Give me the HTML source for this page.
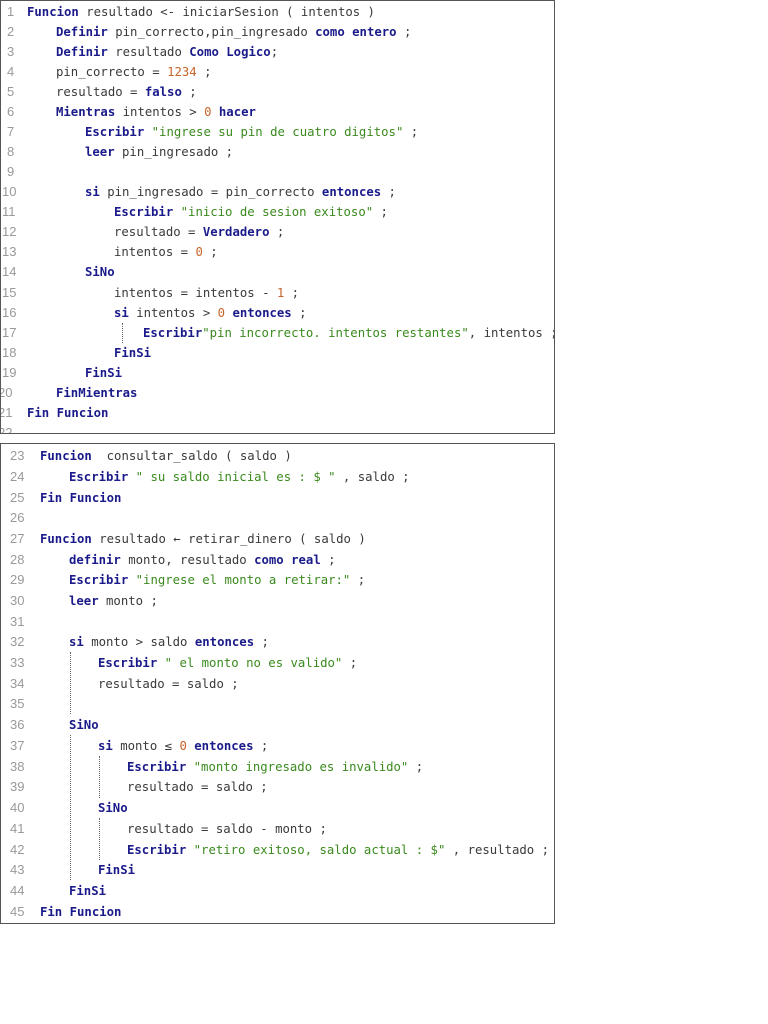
<!DOCTYPE html>
<html><head><meta charset="utf-8">
<style>
html,body{margin:0;padding:0;background:#fff;width:768px;height:1024px;overflow:hidden}
.p{position:absolute;left:0;width:553px;border:1px solid #555;background:#fff;overflow:hidden}
.l{position:absolute;left:0;white-space:pre;font-family:"DejaVu Sans Mono","Liberation Mono",monospace;font-size:12.3px;color:#3a3a3a;line-height:16px}
.n{position:absolute;white-space:pre;font-family:"Liberation Sans",sans-serif;font-size:13px;color:#999;line-height:16px}
.k{color:#1a1a8a;font-weight:bold}
.s{color:#3a8a1e}
.d{color:#c8642a}
.g{position:absolute;border-left:1px dotted #666;width:0}
</style></head><body>
<div class="p" style="top:0;height:432px">
<div class="n" style="left:6px;top:3px">1</div><div class="l" style="left:26px;top:3px"><span class="k">Funcion</span> resultado &lt;- iniciarSesion ( intentos )</div>
<div class="n" style="left:6px;top:23px">2</div><div class="l" style="left:55px;top:23px"><span class="k">Definir</span> pin_correcto,pin_ingresado <span class="k">como entero</span> ;</div>
<div class="n" style="left:6px;top:43px">3</div><div class="l" style="left:55px;top:43px"><span class="k">Definir</span> resultado <span class="k">Como Logico</span>;</div>
<div class="n" style="left:6px;top:63px">4</div><div class="l" style="left:55px;top:63px">pin_correcto = <span class="d">1234</span> ;</div>
<div class="n" style="left:6px;top:83px">5</div><div class="l" style="left:55px;top:83px">resultado = <span class="k">falso</span> ;</div>
<div class="n" style="left:6px;top:103px">6</div><div class="l" style="left:55px;top:103px"><span class="k">Mientras</span> intentos &gt; <span class="d">0</span> <span class="k">hacer</span></div>
<div class="n" style="left:6px;top:123px">7</div><div class="l" style="left:84px;top:123px"><span class="k">Escribir</span> <span class="s">"ingrese su pin de cuatro digitos"</span> ;</div>
<div class="n" style="left:6px;top:143px">8</div><div class="l" style="left:84px;top:143px"><span class="k">leer</span> pin_ingresado ;</div>
<div class="n" style="left:6px;top:163px">9</div>
<div class="n" style="left:1px;top:183px">10</div><div class="l" style="left:84px;top:183px"><span class="k">si</span> pin_ingresado = pin_correcto <span class="k">entonces</span> ;</div>
<div class="n" style="left:1px;top:203px">11</div><div class="l" style="left:113px;top:203px"><span class="k">Escribir</span> <span class="s">"inicio de sesion exitoso"</span> ;</div>
<div class="n" style="left:1px;top:223px">12</div><div class="l" style="left:113px;top:223px">resultado = <span class="k">Verdadero</span> ;</div>
<div class="n" style="left:1px;top:243px">13</div><div class="l" style="left:113px;top:243px">intentos = <span class="d">0</span> ;</div>
<div class="n" style="left:1px;top:263px">14</div><div class="l" style="left:84px;top:263px"><span class="k">SiNo</span></div>
<div class="n" style="left:1px;top:284px">15</div><div class="l" style="left:113px;top:284px">intentos = intentos - <span class="d">1</span> ;</div>
<div class="n" style="left:1px;top:304px">16</div><div class="l" style="left:113px;top:304px"><span class="k">si</span> intentos &gt; <span class="d">0</span> <span class="k">entonces</span> ;</div>
<div class="n" style="left:1px;top:324px">17</div><div class="l" style="left:142px;top:324px"><span class="k">Escribir</span><span class="s">"pin incorrecto. intentos restantes"</span>, intentos ;</div>
<div class="g" style="left:121px;top:322px;height:20px"></div>
<div class="n" style="left:1px;top:344px">18</div><div class="l" style="left:113px;top:344px"><span class="k">FinSi</span></div>
<div class="n" style="left:1px;top:364px">19</div><div class="l" style="left:84px;top:364px"><span class="k">FinSi</span></div>
<div class="n" style="left:-3px;top:384px">20</div><div class="l" style="left:55px;top:384px"><span class="k">FinMientras</span></div>
<div class="n" style="left:-3px;top:404px">21</div><div class="l" style="left:26px;top:404px"><span class="k">Fin Funcion</span></div>
<div class="n" style="left:-3px;top:424px">22</div>
</div>
<div class="p" style="top:443px;height:479px">
<div class="n" style="left:9px;top:4px">23</div><div class="l" style="left:39px;top:4px"><span class="k">Funcion</span>  consultar_saldo ( saldo )</div>
<div class="n" style="left:9px;top:25px">24</div><div class="l" style="left:68px;top:25px"><span class="k">Escribir</span> <span class="s">" su saldo inicial es : $ "</span> , saldo ;</div>
<div class="n" style="left:9px;top:46px">25</div><div class="l" style="left:39px;top:46px"><span class="k">Fin Funcion</span></div>
<div class="n" style="left:9px;top:66px">26</div>
<div class="n" style="left:9px;top:87px">27</div><div class="l" style="left:39px;top:87px"><span class="k">Funcion</span> resultado ← retirar_dinero ( saldo )</div>
<div class="n" style="left:9px;top:108px">28</div><div class="l" style="left:68px;top:108px"><span class="k">definir</span> monto, resultado <span class="k">como real</span> ;</div>
<div class="n" style="left:9px;top:128px">29</div><div class="l" style="left:68px;top:128px"><span class="k">Escribir</span> <span class="s">"ingrese el monto a retirar:"</span> ;</div>
<div class="n" style="left:9px;top:149px">30</div><div class="l" style="left:68px;top:149px"><span class="k">leer</span> monto ;</div>
<div class="n" style="left:9px;top:170px">31</div>
<div class="n" style="left:9px;top:190px">32</div><div class="l" style="left:68px;top:190px"><span class="k">si</span> monto &gt; saldo <span class="k">entonces</span> ;</div>
<div class="n" style="left:9px;top:211px">33</div><div class="l" style="left:97px;top:211px"><span class="k">Escribir</span> <span class="s">" el monto no es valido"</span> ;</div>
<div class="n" style="left:9px;top:232px">34</div><div class="l" style="left:97px;top:232px">resultado = saldo ;</div>
<div class="n" style="left:9px;top:252px">35</div>
<div class="g" style="left:69px;top:208px;height:62px"></div>
<div class="n" style="left:9px;top:273px">36</div><div class="l" style="left:68px;top:273px"><span class="k">SiNo</span></div>
<div class="n" style="left:9px;top:294px">37</div><div class="l" style="left:97px;top:294px"><span class="k">si</span> monto ≤ <span class="d">0</span> <span class="k">entonces</span> ;</div>
<div class="n" style="left:9px;top:315px">38</div><div class="l" style="left:126px;top:315px"><span class="k">Escribir</span> <span class="s">"monto ingresado es invalido"</span> ;</div>
<div class="n" style="left:9px;top:335px">39</div><div class="l" style="left:126px;top:335px">resultado = saldo ;</div>
<div class="n" style="left:9px;top:356px">40</div><div class="l" style="left:97px;top:356px"><span class="k">SiNo</span></div>
<div class="n" style="left:9px;top:377px">41</div><div class="l" style="left:126px;top:377px">resultado = saldo - monto ;</div>
<div class="n" style="left:9px;top:398px">42</div><div class="l" style="left:126px;top:398px"><span class="k">Escribir</span> <span class="s">"retiro exitoso, saldo actual : $"</span> , resultado ;</div>
<div class="n" style="left:9px;top:418px">43</div><div class="l" style="left:97px;top:418px"><span class="k">FinSi</span></div>
<div class="g" style="left:69px;top:291px;height:145px"></div>
<div class="g" style="left:98px;top:312px;height:42px"></div>
<div class="g" style="left:98px;top:374px;height:42px"></div>
<div class="n" style="left:9px;top:439px">44</div><div class="l" style="left:68px;top:439px"><span class="k">FinSi</span></div>
<div class="n" style="left:9px;top:460px">45</div><div class="l" style="left:39px;top:460px"><span class="k">Fin Funcion</span></div>
</div>
</body></html>
